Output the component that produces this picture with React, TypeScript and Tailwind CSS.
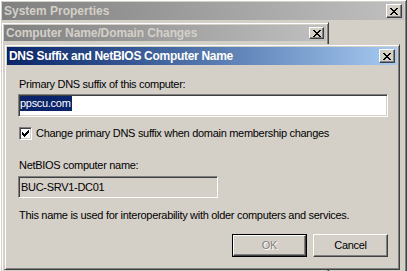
import React from 'react'

const FONT = "font-['Liberation_Sans',Arial,sans-serif]"

// classic 8x7 close glyph
const CROSS =
  'M0 0h2v1H0z M6 0h2v1H6z M1 1h2v1H1z M5 1h2v1H5z M2 2h4v1H2z M3 3h2v1H3z M2 4h4v1H2z M1 5h2v1H1z M5 5h2v1H5z M0 6h2v1H0z M6 6h2v1H6z'

const CHECK =
  'M6 0h1v1H6z M5 1h2v1H5z M0 2h1v1H0z M4 2h3v1H4z M0 3h2v1H0z M3 3h3v1H3z M0 4h5v1H0z M1 5h3v1H1z M2 6h1v1H2z'

const raised =
  'border border-t-white border-l-white border-r-[#404040] border-b-[#404040] shadow-[inset_-1px_-1px_0_#808080] bg-[#d4d0c8]'

const sunken =
  'border border-t-[#808080] border-l-[#808080] border-r-white border-b-white shadow-[inset_1px_1px_0_#404040,inset_-1px_-1px_0_#d4d0c8]'

function CloseButton({ small }: { small?: boolean }) {
  return (
    <div
      className={`${raised} flex items-center justify-center ${
        small ? 'w-[15px] h-[12px]' : 'w-[16px] h-[14px]'
      }`}
    >
      <svg width="8" height="7" viewBox="0 0 8 7" shapeRendering="crispEdges">
        <path d={CROSS} fill="#000" />
      </svg>
    </div>
  )
}

function TitleBar({
  title,
  active,
  height,
  small,
  tracking,
}: {
  title: string
  active?: boolean
  height: string
  small?: boolean
  tracking?: string
}) {
  return (
    <div
      className={`flex items-center justify-between pl-[2px] pr-[2px] shrink-0 ${height} ${
        active
          ? 'bg-linear-to-r from-[#0a246a] to-[#a6caf0] text-white'
          : 'bg-linear-to-r from-[#808080] to-[#c0c0c0] text-[#d4d0c8]'
      }`}
    >
      <span className={`text-[12px] leading-[14px] font-bold ${tracking ?? ''}`}>{title}</span>
      <CloseButton small={small} />
    </div>
  )
}

const frame =
  'absolute flex flex-col bg-[#d4d0c8] p-[2px] border border-t-[#d4d0c8] border-l-[#d4d0c8] border-r-[#404040] border-b-[#404040] shadow-[inset_1px_1px_0_#fff,inset_-1px_-1px_0_#808080]'

export default function App() {
  return (
    <div
      className={`${FONT} relative w-[407px] h-[271px] overflow-hidden bg-[#d4d0c8] text-[11px] leading-[13px] text-black tracking-[-0.3px]`}
    >
      {/* System Properties */}
      <div className={`${frame} left-[-1px] top-[-1px] w-[408px] h-[300px]`}>
        <TitleBar title="System Properties" height="h-[18px]" tracking="tracking-[0px]" />
      </div>

      {/* Computer Name/Domain Changes */}
      <div className={`${frame} left-[1px] top-[22px] w-[328px] h-[280px]`}>
        <TitleBar
          title="Computer Name/Domain Changes"
          height="h-[16px]"
          small
          tracking="tracking-[-0.1px]"
        />
      </div>

      {/* DNS Suffix dialog */}
      <div className={`${frame} left-[4px] top-[44px] w-[396px] h-[226px]`}>
        <TitleBar
          title="DNS Suffix and NetBIOS Computer Name"
          active
          height="h-[18px]"
          tracking="tracking-[-0.3px]"
        />

        <div className="flex flex-col pl-[11px] pt-[13px]">
          <div className="pl-[1px]">Primary DNS suffix of this computer:</div>

          <div className={`${sunken} mt-[3px] w-[370px] h-[23px] bg-white pt-[1px] pl-[1px]`}>
            <span className="inline-block bg-[#0a246a] text-white leading-[15px] pr-[1px]">ppscu.com</span>
          </div>

          <div className="mt-[10px] flex items-center h-[13px] pl-[1px]">
            <div className={`${sunken} w-[13px] h-[13px] bg-white flex items-center justify-center`}>
              <svg width="7" height="7" viewBox="0 0 7 7" shapeRendering="crispEdges">
                <path d={CHECK} fill="#000" />
              </svg>
            </div>
            <span className="ml-[4px]">Change primary DNS suffix when domain membership changes</span>
          </div>

          <div className="mt-[19px] pl-[1px]">NetBIOS computer name:</div>

          <div className={`${sunken} mt-[4px] w-[200px] h-[22px] flex items-center pl-[2px]`}>
            BUC-SRV1-DC01
          </div>

          <div className="mt-[11px] pl-[1px]">
            This name is used for interoperability with older computers and services.
          </div>

          <div className="mt-[12px] w-[370px] flex justify-end gap-[6px]">
            <div className="w-[75px] h-[23px] border border-black">
              <div className={`${raised} w-full h-full flex items-center justify-center text-[#808080] [text-shadow:1px_1px_0_#fff]`}>
                OK
              </div>
            </div>
            <div className={`${raised} w-[75px] h-[23px] flex items-center justify-center`}>
              Cancel
            </div>
          </div>
        </div>
      </div>
    </div>
  )
}
